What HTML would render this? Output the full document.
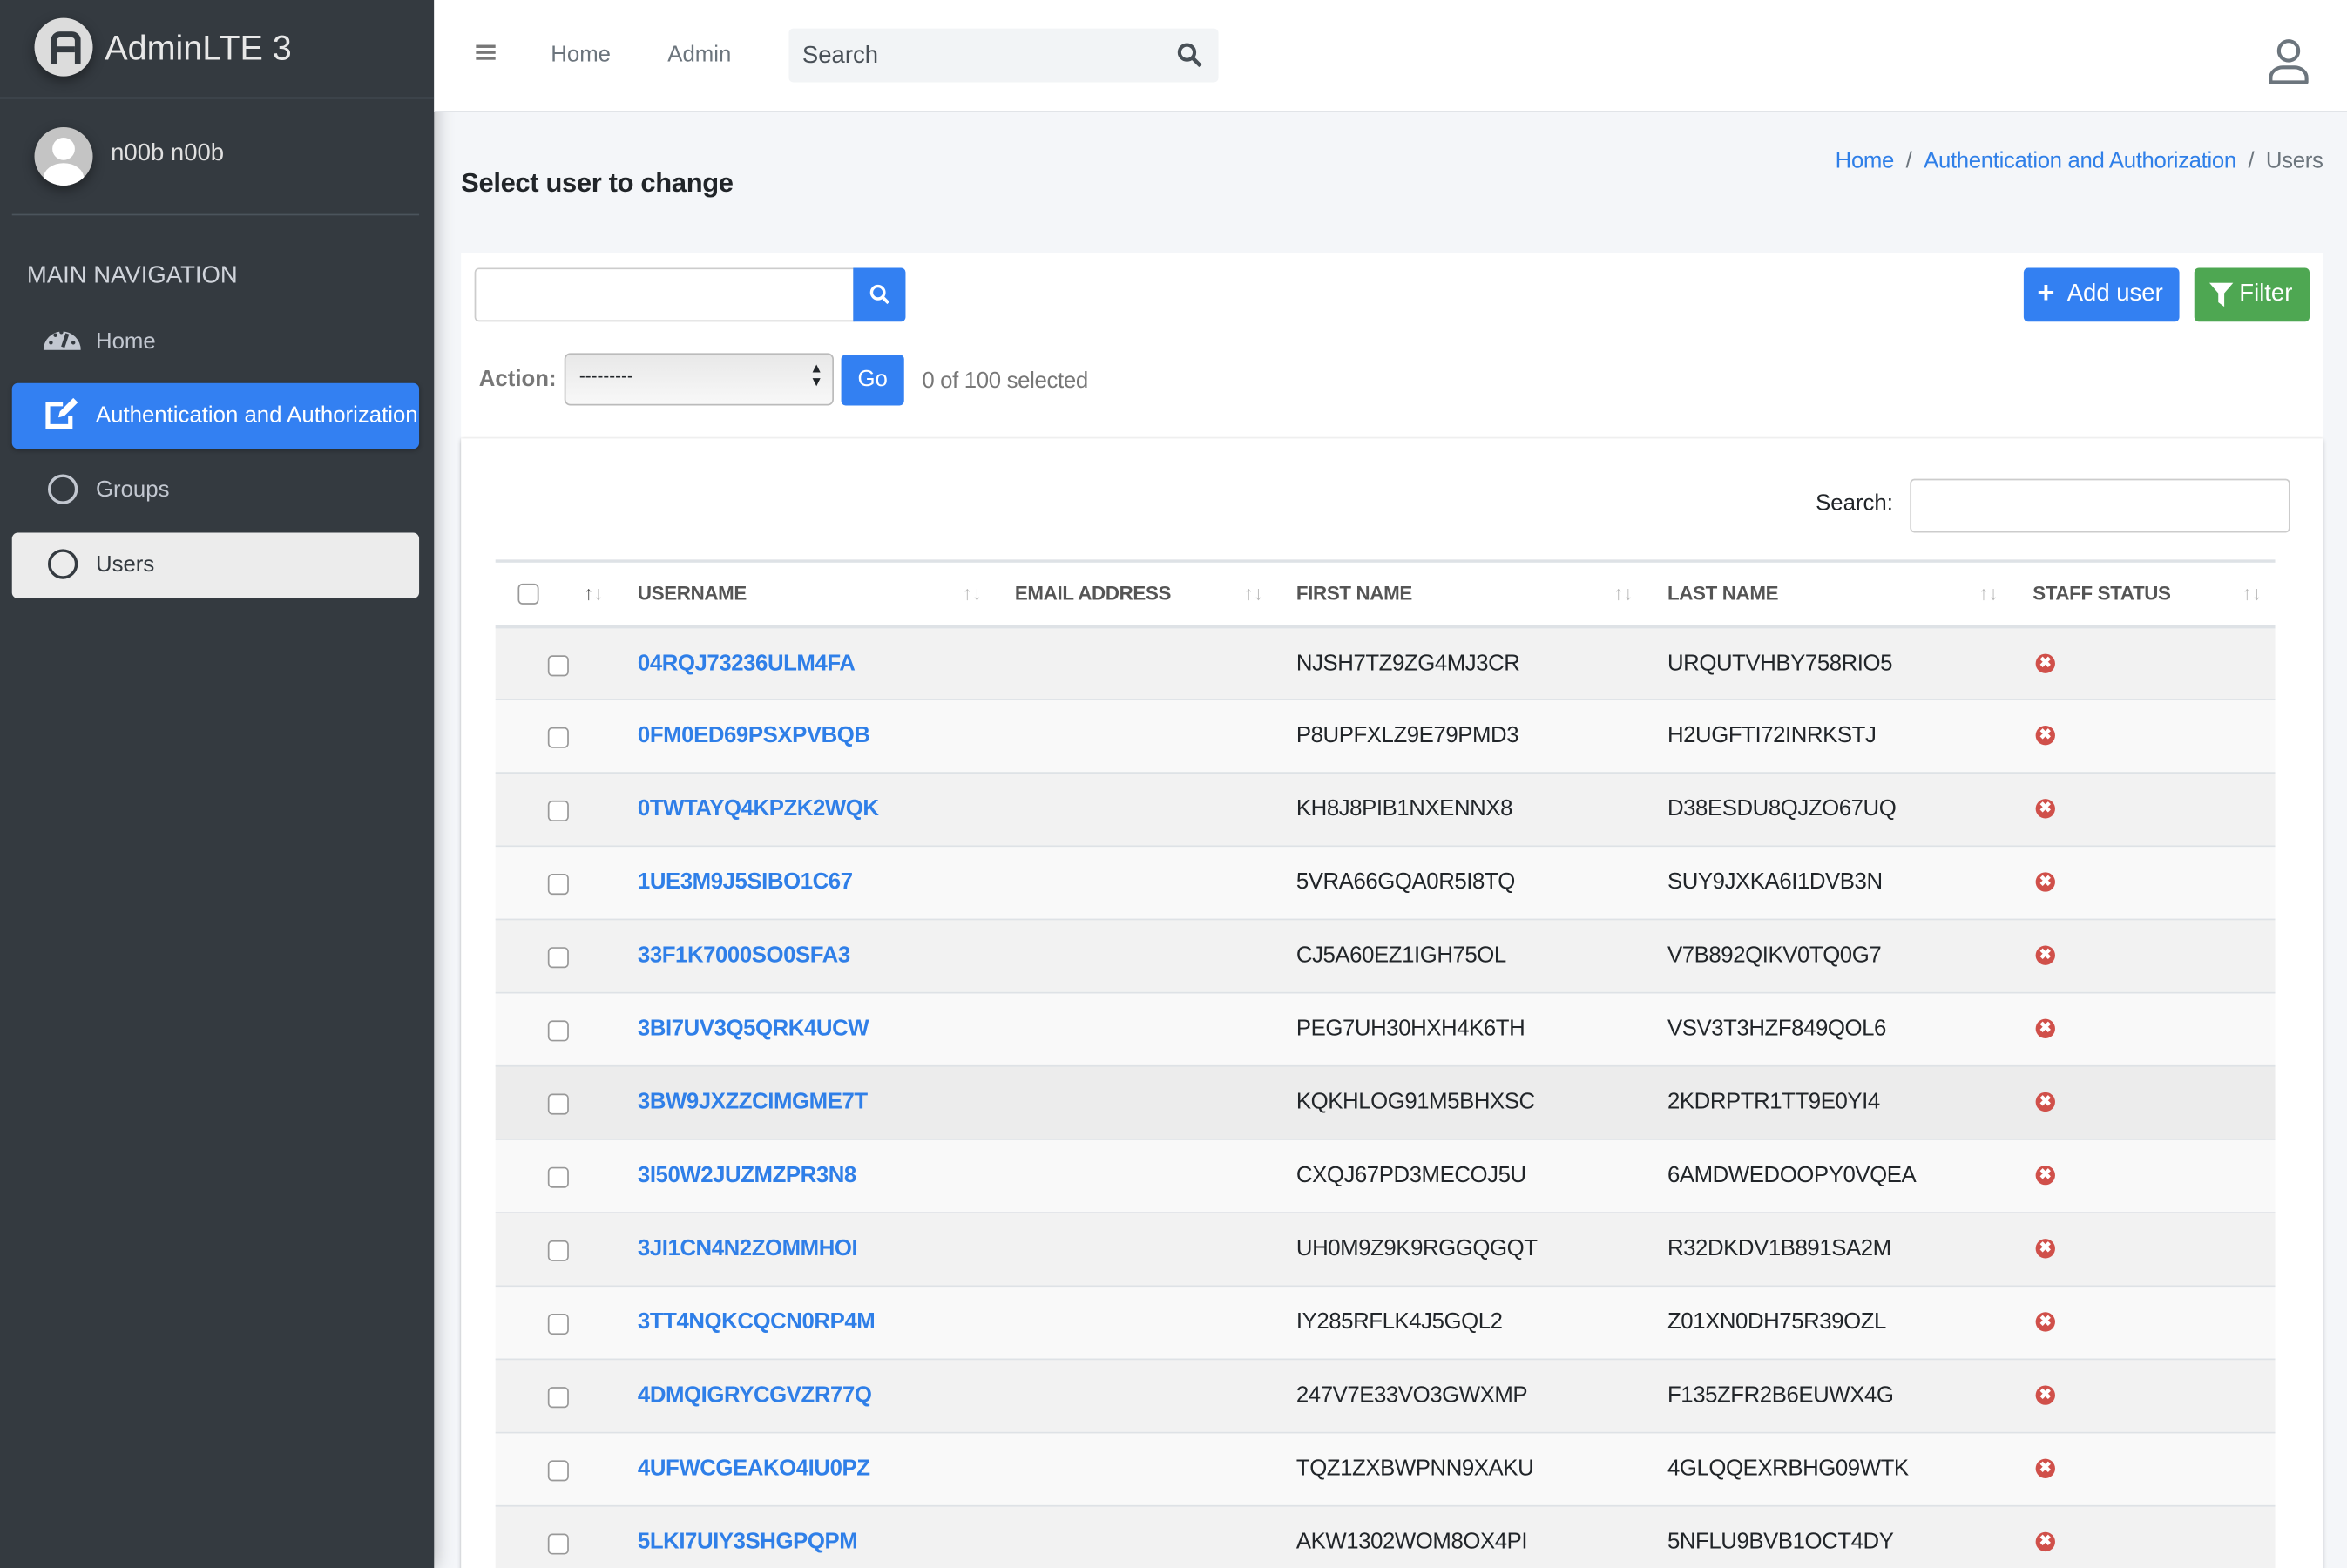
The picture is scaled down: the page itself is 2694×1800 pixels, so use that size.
<!DOCTYPE html>
<html><head><meta charset="utf-8"><style>
html,body{margin:0;padding:0;width:2694px;height:1800px;overflow:hidden;background:#f4f6f9}
#w{position:absolute;left:0;top:0;width:1568px;height:1048px;transform:scale(1.71811,1.71756);transform-origin:0 0;font-family:"Liberation Sans",Arial,sans-serif;color:#212529;overflow:hidden;background:#f4f6f9}
.a{position:absolute}
#sb{left:0;top:0;width:290px;height:1048px;background:#343a40;box-shadow:0 0 12px rgba(0,0,0,.3)}
.nav{position:absolute;left:8px;width:272px;height:44px;border-radius:4px;font-size:15px;color:#c2c7d0}
.nav span{position:absolute;left:56px;top:13px}
#top{left:290px;top:0;width:1278px;height:74px;background:#fff;border-bottom:1px solid #dee2e6}
.card{background:#fff;box-shadow:0 0 1px rgba(0,0,0,.125),0 1px 3px rgba(0,0,0,.2)}
.row{position:absolute;left:331px;width:1189px;height:48px;border-top:1px solid #dee2e6;font-size:15px;letter-spacing:-0.25px}
.row .c{position:absolute;top:15px}
.cb{position:absolute;width:12px;height:12px;border:1px solid #999;border-radius:3px;background:#fff}
.lk{color:#2f7fe8;font-weight:bold}
.x{position:absolute;left:1029px;top:17px;width:13px;height:13px;border-radius:50%;background:#d0504a;color:#fff;font-size:10px;line-height:13px;text-align:center;font-weight:bold;letter-spacing:0}
.th{position:absolute;top:389px;font-size:13px;font-weight:bold;color:#555;letter-spacing:-0.2px}
.so{position:absolute;top:389px;font-size:13px;color:#bbb}
</style></head><body><div id="w">
<div id="sb" class="a">
 <div class="a" style="left:23px;top:12px;width:39px;height:39px;border-radius:50%;background:#dcdcdc;box-shadow:0 3px 8px rgba(0,0,0,.4)">
  <div class="a" style="left:11px;top:9px;width:12px;height:18px;border:4px solid #343a40;border-bottom:none;border-radius:6px 6px 0 0"></div>
  <div class="a" style="left:13px;top:19px;width:14px;height:4px;background:#343a40"></div>
 </div>
 <div class="a" style="left:70px;top:19px;font-size:23px;color:#e8e8e8">AdminLTE 3</div>
 <div class="a" style="left:0;top:65px;width:290px;height:1px;background:#4b545c"></div>
 <div class="a" style="left:23px;top:85px;width:39px;height:39px;border-radius:50%;background:#c4c4c4;overflow:hidden;box-shadow:0 3px 8px rgba(0,0,0,.4)">
  <div class="a" style="left:12px;top:7px;width:15px;height:15px;border-radius:50%;background:#fff"></div>
  <div class="a" style="left:6px;top:24px;width:27px;height:20px;border-radius:50% 50% 0 0;background:#fff"></div>
 </div>
 <div class="a" style="left:74px;top:94px;font-size:16px;color:#e0e0e0">n00b n00b</div>
 <div class="a" style="left:8px;top:143px;width:272px;height:1px;background:#4b545c"></div>
 <div class="a" style="left:18px;top:176px;font-size:16px;color:#d0d4db">MAIN NAVIGATION</div>
 <div class="nav" style="top:207px"><svg class="a" style="left:21px;top:11px" width="25" height="16" viewBox="0 0 25 16"><path d="M0 16A12.5 12.5 0 0 1 25 16z" fill="#c2c7d0"/><path d="M13 14l3-9" stroke="#343a40" stroke-width="2.5"/><circle cx="5" cy="11" r="1.3" fill="#343a40"/><circle cx="8" cy="6" r="1.3" fill="#343a40"/><circle cx="20" cy="11" r="1.3" fill="#343a40"/><circle cx="12" cy="4" r="1.3" fill="#343a40"/></svg><span>Home</span></div>
 <div class="nav" style="top:256px;background:#3380f2;color:#fff;box-shadow:0 1px 3px rgba(0,0,0,.3);overflow:hidden;white-space:nowrap">
  <svg class="a" style="left:21px;top:10px" width="24" height="22" viewBox="0 0 24 22"><path d="M13 4H3v15h15v-7" fill="none" stroke="#fff" stroke-width="3"/><path d="M10 13l1-4 9-9 3 3-9 9z" fill="#fff"/></svg>
  <span>Authentication and Authorization</span></div>
 <div class="nav" style="top:306px"><div class="a" style="left:24px;top:11px;width:16px;height:16px;border:2px solid #c2c7d0;border-radius:50%"></div><span>Groups</span></div>
 <div class="nav" style="top:356px;background:#ececec;color:#343a40"><div class="a" style="left:24px;top:11px;width:16px;height:16px;border:2px solid #343a40;border-radius:50%"></div><span>Users</span></div>
</div>
<div id="top" class="a">
 <div class="a" style="left:28px;top:30px;width:13px;height:2px;background:#777;box-shadow:0 4px 0 #777,0 8px 0 #777"></div>
 <div class="a" style="left:78px;top:28px;font-size:15px;color:#6c757d">Home</div>
 <div class="a" style="left:156px;top:28px;font-size:15px;color:#6c757d">Admin</div>
 <div class="a" style="left:237px;top:19px;width:287px;height:36px;background:#f2f4f6;border-radius:3px">
  <div class="a" style="left:9px;top:10px;font-size:16px;color:#495057">Search</div>
  <svg class="a" style="left:259px;top:9px" width="18" height="18" viewBox="0 0 18 18"><circle cx="7" cy="7" r="5" fill="none" stroke="#495057" stroke-width="2.4"/><path d="M11 11l5 5" stroke="#495057" stroke-width="2.6"/></svg>
 </div>
 <svg class="a" style="left:1224px;top:25px" width="30" height="32" viewBox="0 0 30 32"><circle cx="15" cy="9" r="6.5" fill="none" stroke="#6c757d" stroke-width="2.4"/><path d="M3 30v-3c0-4 4-7 8-7h8c4 0 8 3 8 7v3z" fill="none" stroke="#6c757d" stroke-width="2.4" stroke-linejoin="round"/></svg>
</div>
<div class="a" style="left:308px;top:112px;font-size:18px;font-weight:bold;color:#212529;letter-spacing:-0.2px">Select user to change</div>
<div class="a" style="right:16px;top:99px;font-size:15px;color:#6c757d;white-space:nowrap;letter-spacing:-0.2px"><span style="color:#2f7fe8">Home</span>&nbsp;&nbsp;/&nbsp;&nbsp;<span style="color:#2f7fe8">Authentication and Authorization</span>&nbsp;&nbsp;/&nbsp;&nbsp;Users</div>
<div class="a card" style="left:308px;top:169px;width:1244px;height:900px;box-shadow:none"></div>
<div class="a" style="left:317px;top:179px;width:252px;height:34px;border:1px solid #ccc;border-radius:3px 0 0 3px;background:#fff"></div>
<div class="a" style="left:570px;top:179px;width:35px;height:36px;background:#3380f2;border-radius:0 3px 3px 0">
 <svg class="a" style="left:10px;top:10px" width="16" height="16" viewBox="0 0 16 16"><circle cx="6.5" cy="6.5" r="4.2" fill="none" stroke="#fff" stroke-width="2"/><path d="M9.5 9.5l4 4" stroke="#fff" stroke-width="2.2"/></svg>
</div>
<div class="a" style="left:1352px;top:179px;width:104px;height:36px;background:#3380f2;border-radius:3px;color:#fff;font-size:16px"><span class="a" style="left:9px;top:7px;font-size:20px;font-weight:bold;line-height:20px">+</span><span class="a" style="left:29px;top:9px">Add user</span></div>
<div class="a" style="left:1466px;top:179px;width:77px;height:36px;background:#4ea752;border-radius:3px;color:#fff;font-size:16px"><svg class="a" style="left:10px;top:10px" width="16" height="16" viewBox="0 0 16 16"><path d="M0 0h16l-6 7v9l-4-3V7z" fill="#fff"/></svg><span class="a" style="left:30px;top:9px">Filter</span></div>
<div class="a" style="left:320px;top:245px;font-size:15px;font-weight:bold;color:#777">Action:</div>
<div class="a" style="left:377px;top:236px;width:178px;height:33px;border:1px solid #bbb;border-radius:4px;background:linear-gradient(#e8e8e8,#f8f8f8)"><span class="a" style="left:9px;top:7px;font-size:12px">---------</span><span class="a" style="left:163px;top:5px;font-size:9px;line-height:9px">▲<br>▼</span></div>
<div class="a" style="left:562px;top:237px;width:42px;height:34px;background:#3380f2;border-radius:3px;color:#fff;font-size:15px;text-align:center;line-height:34px">Go</div>
<div class="a" style="left:616px;top:246px;font-size:15px;color:#777;letter-spacing:-0.2px">0 of 100 selected</div>
<div class="a card" style="left:308px;top:293px;width:1244px;height:780px"></div>
<div class="a" style="left:1213px;top:328px;font-size:15px">Search:</div>
<div class="a" style="left:1276px;top:320px;width:252px;height:34px;border:1px solid #ccc;border-radius:3px;background:#fff"></div>
<div class="a" style="left:331px;top:374px;width:1189px;height:2px;background:#dee2e6"></div>
<div class="cb" style="left:346px;top:390px"></div>
<div class="so" style="left:390px;color:#555">↑<span style="color:#bbb">↓</span></div>
<div class="th" style="left:426px">USERNAME</div><div class="so" style="left:643px">↑↓</div>
<div class="th" style="left:678px">EMAIL ADDRESS</div><div class="so" style="left:831px">↑↓</div>
<div class="th" style="left:866px">FIRST NAME</div><div class="so" style="left:1078px">↑↓</div>
<div class="th" style="left:1114px">LAST NAME</div><div class="so" style="left:1322px">↑↓</div>
<div class="th" style="left:1358px">STAFF STATUS</div><div class="so" style="left:1498px">↑↓</div>
<div class="row" style="top:418px;background:#f2f2f2;border-top:2px solid #dee2e6;height:47px"><div class="cb" style="left:35px;top:18px"></div><div class="c lk" style="left:95px">04RQJ73236ULM4FA</div><div class="c" style="left:535px">NJSH7TZ9ZG4MJ3CR</div><div class="c" style="left:783px">URQUTVHBY758RIO5</div><div class="x">✖</div></div>
<div class="row" style="top:467px;background:#f9f9f9"><div class="cb" style="left:35px;top:18px"></div><div class="c lk" style="left:95px">0FM0ED69PSXPVBQB</div><div class="c" style="left:535px">P8UPFXLZ9E79PMD3</div><div class="c" style="left:783px">H2UGFTI72INRKSTJ</div><div class="x">✖</div></div>
<div class="row" style="top:516px;background:#f2f2f2"><div class="cb" style="left:35px;top:18px"></div><div class="c lk" style="left:95px">0TWTAYQ4KPZK2WQK</div><div class="c" style="left:535px">KH8J8PIB1NXENNX8</div><div class="c" style="left:783px">D38ESDU8QJZO67UQ</div><div class="x">✖</div></div>
<div class="row" style="top:565px;background:#f9f9f9"><div class="cb" style="left:35px;top:18px"></div><div class="c lk" style="left:95px">1UE3M9J5SIBO1C67</div><div class="c" style="left:535px">5VRA66GQA0R5I8TQ</div><div class="c" style="left:783px">SUY9JXKA6I1DVB3N</div><div class="x">✖</div></div>
<div class="row" style="top:614px;background:#f2f2f2"><div class="cb" style="left:35px;top:18px"></div><div class="c lk" style="left:95px">33F1K7000SO0SFA3</div><div class="c" style="left:535px">CJ5A60EZ1IGH75OL</div><div class="c" style="left:783px">V7B892QIKV0TQ0G7</div><div class="x">✖</div></div>
<div class="row" style="top:663px;background:#f9f9f9"><div class="cb" style="left:35px;top:18px"></div><div class="c lk" style="left:95px">3BI7UV3Q5QRK4UCW</div><div class="c" style="left:535px">PEG7UH30HXH4K6TH</div><div class="c" style="left:783px">VSV3T3HZF849QOL6</div><div class="x">✖</div></div>
<div class="row" style="top:712px;background:#ececec"><div class="cb" style="left:35px;top:18px"></div><div class="c lk" style="left:95px">3BW9JXZZCIMGME7T</div><div class="c" style="left:535px">KQKHLOG91M5BHXSC</div><div class="c" style="left:783px">2KDRPTR1TT9E0YI4</div><div class="x">✖</div></div>
<div class="row" style="top:761px;background:#f9f9f9"><div class="cb" style="left:35px;top:18px"></div><div class="c lk" style="left:95px">3I50W2JUZMZPR3N8</div><div class="c" style="left:535px">CXQJ67PD3MECOJ5U</div><div class="c" style="left:783px">6AMDWEDOOPY0VQEA</div><div class="x">✖</div></div>
<div class="row" style="top:810px;background:#f2f2f2"><div class="cb" style="left:35px;top:18px"></div><div class="c lk" style="left:95px">3JI1CN4N2ZOMMHOI</div><div class="c" style="left:535px">UH0M9Z9K9RGGQGQT</div><div class="c" style="left:783px">R32DKDV1B891SA2M</div><div class="x">✖</div></div>
<div class="row" style="top:859px;background:#f9f9f9"><div class="cb" style="left:35px;top:18px"></div><div class="c lk" style="left:95px">3TT4NQKCQCN0RP4M</div><div class="c" style="left:535px">IY285RFLK4J5GQL2</div><div class="c" style="left:783px">Z01XN0DH75R39OZL</div><div class="x">✖</div></div>
<div class="row" style="top:908px;background:#f2f2f2"><div class="cb" style="left:35px;top:18px"></div><div class="c lk" style="left:95px">4DMQIGRYCGVZR77Q</div><div class="c" style="left:535px">247V7E33VO3GWXMP</div><div class="c" style="left:783px">F135ZFR2B6EUWX4G</div><div class="x">✖</div></div>
<div class="row" style="top:957px;background:#f9f9f9"><div class="cb" style="left:35px;top:18px"></div><div class="c lk" style="left:95px">4UFWCGEAKO4IU0PZ</div><div class="c" style="left:535px">TQZ1ZXBWPNN9XAKU</div><div class="c" style="left:783px">4GLQQEXRBHG09WTK</div><div class="x">✖</div></div>
<div class="row" style="top:1006px;background:#f2f2f2"><div class="cb" style="left:35px;top:18px"></div><div class="c lk" style="left:95px">5LKI7UIY3SHGPQPM</div><div class="c" style="left:535px">AKW1302WOM8OX4PI</div><div class="c" style="left:783px">5NFLU9BVB1OCT4DY</div><div class="x">✖</div></div>
</div></body></html>
